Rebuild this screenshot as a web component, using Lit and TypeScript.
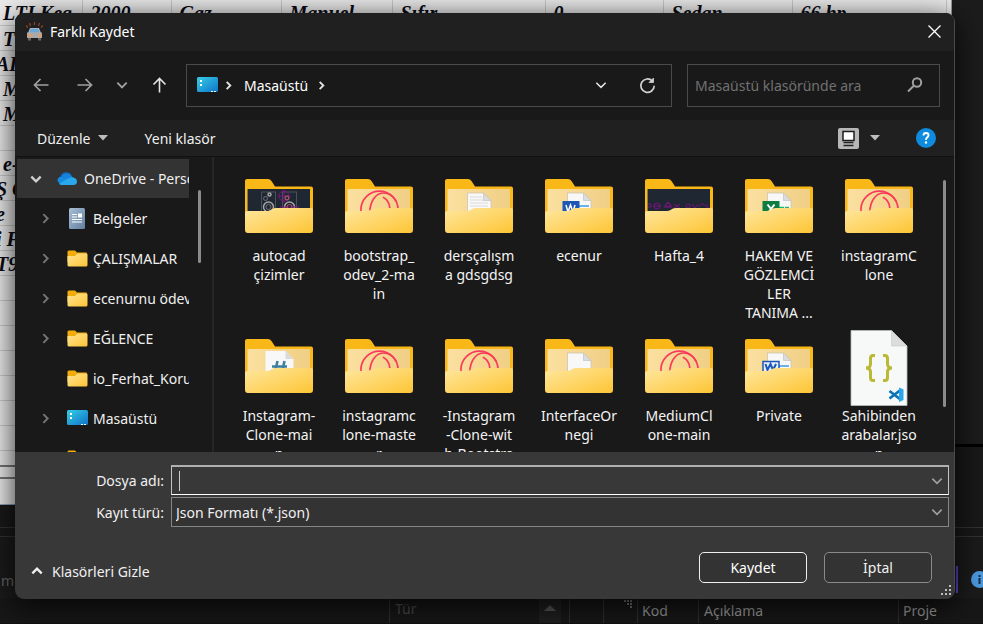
import { LitElement, html, css, svg, nothing } from "lit";
import { customElement } from "lit/decorators.js";

type Inset = "cad" | "opera" | "text" | "word" | "purple" | "excel" | "css" | "blank" | "wordold";

interface FileItem {
  lines: string[];
  inset?: Inset;
  json?: boolean;
}

const FILES: FileItem[] = [
  { lines: ["autocad", "çizimler"], inset: "cad" },
  { lines: ["bootstrap_", "odev_2-ma", "in"], inset: "opera" },
  { lines: ["dersçalışm", "a gdsgdsg"], inset: "text" },
  { lines: ["ecenur"], inset: "word" },
  { lines: ["Hafta_4"], inset: "purple" },
  { lines: ["HAKEM VE", "GÖZLEMCİ", "LER", "TANIMA ..."], inset: "excel" },
  { lines: ["instagramC", "lone"], inset: "opera" },
  { lines: ["Instagram-", "Clone-mai", "n"], inset: "css" },
  { lines: ["instagramc", "lone-maste", "r"], inset: "opera" },
  { lines: ["-Instagram", "-Clone-wit", "h-Bootstra"], inset: "opera" },
  { lines: ["InterfaceOr", "negi"], inset: "blank" },
  { lines: ["MediumCl", "one-main"], inset: "opera" },
  { lines: ["Private"], inset: "wordold" },
  { lines: ["Sahibinden", "arabalar.jso", "n"], json: true },
];

type TreeIcon = "cloud" | "doc" | "folder" | "desktop";
const TREE: { label: string; icon: TreeIcon; arrow: boolean }[] = [
  { label: "Belgeler", icon: "doc", arrow: true },
  { label: "ÇALIŞMALAR", icon: "folder", arrow: true },
  { label: "ecenurnu ödevler", icon: "folder", arrow: true },
  { label: "EĞLENCE", icon: "folder", arrow: true },
  { label: "io_Ferhat_Korucu", icon: "folder", arrow: false },
  { label: "Masaüstü", icon: "desktop", arrow: true },
  { label: "", icon: "folder", arrow: false },
];

const SHEET: string[][] = [
  ["LTI Keg", "2000", "Gaz", "Manuel", "Sıfır", "0", "Sedan", "66 hp"],
  ["T"], ["AI"], ["M"], ["M"], [], ["e-"], ["Ş C"], ["e"], ["i F"], ["T9"],
  [], [], [], [], [], [], [],
];
const SCROLLED_ROWS = new Set([2, 7, 8, 9, 10]);

const chevron = (dir: "down" | "right" | "up", size = 12, w = 2) => {
  const d = { down: "M2 4 L6 8 L10 4", right: "M4 2 L8 6 L4 10", up: "M2 8 L6 4 L10 8" }[dir];
  return html`<svg width=${size} height=${size} viewBox="0 0 12 12" fill="none" stroke="currentColor" stroke-width=${w}><path d=${d} /></svg>`;
};

const desktopIcon = html`<svg width="21" height="16" viewBox="0 0 21 16">
  <defs><linearGradient id="dk" x1="0" y1="0" x2="1" y2="1"><stop offset="0" stop-color="#35cfe6" /><stop offset="1" stop-color="#1072c8" /></linearGradient></defs>
  <rect width="21" height="15" rx="1.5" fill="url(#dk)" />
  <path d="M3 3h2v2H3zM3 7h2v2H3z" fill="#fff" /><path d="M14 14h2v1h-2zM17 14h2v1h-2z" fill="#dff" />
</svg>`;

const smallFolder = html`<svg width="21" height="17" viewBox="0 0 21 17">
  <defs><linearGradient id="sf" x1="0" y1="0" x2="1" y2="1"><stop offset="0" stop-color="#ffe394" /><stop offset="1" stop-color="#fcc435" /></linearGradient></defs>
  <path d="M1.500 0.500H8L10 2.500H19.500L20 4V12H0.500V1.500Z" fill="#f3ad0b" />
  <path d="M0.500 6H8L10.500 3.500H19.500Q20.500 3.500 20.500 4.500V15Q20.500 16.500 19 16.500H2Q0.500 16.500 0.500 15Z" fill="url(#sf)" />
</svg>`;

const treeIcon = (kind: TreeIcon) => {
  if (kind === "cloud")
    return html`<svg width="20" height="13" viewBox="0 0 20 13">
      <path d="M4.500 12A4.200 4.200 0 0 1 3.500 4.300A6 6 0 0 1 14.500 3.500L16 6L11 11Z" fill="#0f6cc4" />
      <path d="M7 2A6 6 0 0 1 14.800 4.400L16.500 7L9 8L5 4Z" fill="#1683da" />
      <path d="M2 11Q0 9 .6 7Q1.800 4.500 5 4.500L15 9.500L12 12.800H4Q3 12.800 2 11Z" fill="#168ade" />
      <path d="M4 13L2 12Q10 7 12 6Q14 4.600 16.500 5.600Q20 6.700 20 9.800Q19.600 13 16.500 13Z" fill="#29a9ec" />
    </svg>`;
  if (kind === "doc")
    return html`<svg width="16" height="21" viewBox="0 0 16 21">
      <defs><linearGradient id="dc" x1="0" y1="0" x2="1" y2="1"><stop offset="0" stop-color="#a9bfd6" /><stop offset="1" stop-color="#627f9f" /></linearGradient></defs>
      <rect width="16" height="21" rx="1.500" fill="url(#dc)" />
      <path d="M3 6h5v1H3zM3 8.500h5v1H3zM9 5.500h4v4H9zM3 11h10v1H3zM3 13.500h10v1H3z" fill="#fff" />
    </svg>`;
  return kind === "desktop" ? desktopIcon : smallFolder;
};

const page = svg`<path d="M22.500 14H38.500L46 21.500V40H22.500Z" fill="#f8f8f8" stroke="#c9c2b0" stroke-width=".7"/><path d="M38.500 14V21.500H46Z" fill="#dcdcdc" stroke="#bbb" stroke-width=".6"/>`;

const insetArt = (kind?: Inset) => {
  switch (kind) {
    case "opera":
      return svg`<g fill="none" stroke="#fa3a5c" stroke-width="1.700" stroke-linecap="round">
        <circle cx="34.500" cy="30.800" r="18.600"/>
        <path d="M24.800 33C25 23 30 14.500 38 14C44 13.800 48.500 17.500 51 22"/>
        <path d="M38.500 18.500C42 20.500 44.500 24 44.800 29"/></g>`;
    case "cad":
      return svg`<path d="M2.500 10H65V36H2.500Z" fill="#1f2733"/>
        <g fill="none" stroke="#4c5258" stroke-width="1"><rect x="16.500" y="13" width="14" height="24"/><rect x="37.500" y="13" width="14" height="24"/></g>
        <g fill="none" stroke="#a5a5a5" stroke-width="1.500"><circle cx="23.500" cy="28" r="5"/><circle cx="44.500" cy="28" r="5"/><circle cx="24.500" cy="15.500" r="1.500"/></g>
        <g fill="none" stroke="#707078" stroke-width="1"><circle cx="20.500" cy="19.500" r="2"/><circle cx="23.500" cy="28" r="2.500"/></g>
        <g fill="none" stroke="#7b157f" stroke-width="1"><circle cx="39" cy="17" r="5"/><path d="M33 17H46M39 11V24M35 28H54"/></g>
        <circle cx="42" cy="19" r="2" fill="none" stroke="#c46a70"/><circle cx="44.500" cy="28" r="2.500" fill="none" stroke="#b6516a"/>`;
    case "purple":
      return svg`<path d="M2.500 10H65V36H2.500Z" fill="#1f2733"/>
        <g fill="none" stroke="#7b127f" stroke-width="1"><path d="M3 25h3v3H3M8 27h8M19 28l4-5 4 5ZM29 25l6 4M29 29l6-4M47 25l3 4 3-4M54 28q3-6 6-1M62 25v4h3"/><circle cx="12" cy="27" r="3"/><circle cx="23" cy="26" r="2"/><circle cx="43" cy="27" r="2"/></g>`;
    case "text":
      return svg`${page}<path d="M25 18h12M25 21h14M25 24h18M25 27h18" stroke="#d2d2d2" stroke-width=".8"/>`;
    case "blank":
      return page;
    case "word":
      return svg`${page}<path d="M34 27H44" stroke="#3f9be0" stroke-width="1.500"/><rect x="17.500" y="22" width="17" height="15" fill="#1c57b5"/><path d="M21 26l2 7 2.500-7 2.500 7 2-7" fill="none" stroke="#fff" stroke-width="1.500"/>`;
    case "wordold":
      return svg`${page}<path d="M34 27H44" stroke="#3f9be0" stroke-width="1.500"/><rect x="18" y="22.500" width="16" height="15" fill="#e6eefb" stroke="#1c57b5" stroke-width="1.500"/><path d="M20.500 25l2 6 3-6 2.500 6 3-6" fill="none" stroke="#1c57b5" stroke-width="2"/>`;
    case "excel":
      return svg`${page}<path d="M34 28.500H39M40 28.500H44" stroke="#24b36b" stroke-width="1.500"/><rect x="17.500" y="22" width="17" height="15" fill="#107c41"/><path d="M22.500 25.500l7 9M29.500 25.500l-7 9" stroke="#fff" stroke-width="2"/>`;
    case "css":
      return svg`<path d="M20.500 12H40.500L48.500 20V38H20.500Z" fill="#f8f8f8"/><path d="M40.500 12V20H48.500Z" fill="#dadada"/><path d="M27 27.500H42M32.500 22L30.500 31M39.500 22L37.500 31" stroke="#3e7f9d" stroke-width="2.600" fill="none"/>`;
    default:
      return nothing;
  }
};

const bigFolder = (kind?: Inset) => html`<svg class="folder" width="68" height="54" viewBox="0 0 68 54">
  <defs>
    <linearGradient id="fr" x1="0" y1="0" x2="1" y2="1"><stop offset="0" stop-color="#ffe79e" /><stop offset="1" stop-color="#fdc535" /></linearGradient>
    <linearGradient id="in" x1="0" y1="0" x2="1" y2="0"><stop offset="0" stop-color="#fbe0a0" /><stop offset="1" stop-color="#f0cf85" /></linearGradient>
  </defs>
  <path d="M2 0H23Q25 0 26.500 2L30 7.500H66Q68 7.500 68 9.500V48H0V2Q0 0 2 0Z" fill="#fab818" />
  <path d="M2.500 10H65V40H2.500Z" fill="url(#in)" />
  ${insetArt(kind)}
  <path d="M0 34Q0 32 2 32H22Q24 32 25.500 31L28 29.500Q29 29 31 29H66Q68 29 68 31V51Q68 54 65 54H3Q0 54 0 51Z" fill="url(#fr)" />
</svg>`;

const jsonFile = html`<svg width="58" height="76" viewBox="0 0 58 76">
  <path d="M1 .5H41.500L57 16V75.500H1Z" fill="#f7f8f8" stroke="#b9bcbc" stroke-width=".8" />
  <path d="M41.500 .5V16H57Z" fill="#dcdcdc" stroke="#c6c6c6" stroke-width=".6" />
  <g fill="none" stroke="#b9b936" stroke-width="3"><path d="M25 25.500H23Q20.500 25.500 20.500 28.500V34Q20.500 38 16 38Q20.500 38 20.500 42V47.500Q20.500 50.500 23 50.500H25" /><path d="M33 25.500H35Q37.500 25.500 37.500 28.500V34Q37.500 38 42 38Q37.500 38 37.500 42V47.500Q37.500 50.500 35 50.500H33" /></g>
  <path d="M39.500 61L50.500 69.500M39.500 68.500L50.500 60" stroke="#0c72b8" stroke-width="2.800" fill="none" />
  <path d="M49 57.500L53.500 59.500V70L49 72Z" fill="#2aa5ea" />
</svg>`;

@customElement("app-root")
export class AppRoot extends LitElement {
  static styles = css`
    :host {
      display: grid;
      grid-template: minmax(0, 1fr) / minmax(0, 1fr);
      height: 100vh;
      overflow: hidden;
      background: #191919;
      color: #f0f0f0;
      font: 14px/19px "Noto Sans", "Open Sans", sans-serif;
    }
    * { box-sizing: border-box; }
    svg { display: block; flex: none; }
    button, input, select {
      font: inherit; color: inherit; background: none; border: 0; padding: 0; margin: 0;
      outline: none; border-radius: 0; min-width: 0; appearance: none;
    }
    button { display: flex; align-items: center; }
    .behind, .dialog { grid-area: 1 / 1; min-height: 0; min-width: 0; }

    .behind { display: flex; flex-direction: column; overflow: hidden; }
    .desk { display: flex; height: 505px; flex: none; }
    .sheet {
      flex: 1; min-width: 0; overflow: hidden; background: #ececec; border-bottom: 1px solid #8fa4bb;
      border-right: 1px solid #9a9aa4; color: #0a0a14;
    }
    .side { width: 31px; flex: none; }
    .side-top { height: 447px; background: #1c1c1c; border-bottom: 3px solid #000; }
    .grid { width: 947px; table-layout: fixed; border-collapse: collapse; font: italic bold 20px/22px "Liberation Serif", serif; }
    .grid td { height: 25px; padding: 2px 0 0 8px; border: 0 solid #cacaca; border-width: 0 1px 1px 0; white-space: nowrap; overflow: hidden; }
    .grid td:first-child { padding-left: 3px; }
    .grid .scrolled td { text-indent: -7px; }
    .c1 { width: 82px; } .c2 { width: 89px; } .c3 { width: 110px; } .c4 { width: 111px; }
    .c5 { width: 153px; } .c6 { width: 118px; } .c7 { width: 129px; }
    .sheet-foot { margin-top: 14px; height: 14px; border: solid #777; border-width: 2px 0; }
    .tools {
      height: 93px; flex: none; display: flex; align-items: flex-end; justify-content: space-between; color: #666;
      background: linear-gradient(#191919 22px, #333 22px 23px, #191919 23px 31px, #333 31px 32px, #1b1b1b 32px);
    }
    .tools span { padding: 0 0 8px 1px; }
    .info { display: flex; align-items: center; border-left: 2px solid #5b45c9; height: 27px; margin-bottom: 5px; width: 27px; }
    .info i { width: 1px; height: 22px; margin-left: 4px; background: #333; }
    .info svg { margin-left: 9px; }
    .columns { flex: 1; display: flex; background: #171717; color: #9a9a9a; font: 14px/25px "Noto Sans", sans-serif; border-bottom: 2px solid #111; }
    .columns div { border-left: 1px solid #303030; padding-left: 5px; white-space: nowrap; }
    .columns .k0 { width: 389px; border: 0; } .columns .k1 { width: 150px; color: #4c4c4c; line-height: 21px; }
    .columns .k2 { width: 22px; margin-right: 8px; border: 0; padding: 7px 5px 0; background: #202020; }
    .columns .k3 { width: 34px; } .columns .k4 { width: 34px; padding: 2px 0 0 20px; }
    .columns .k5 { width: 61px; padding-left: 4px; } .columns .k6 { width: 200px; } .columns .k7 { flex: 1; padding-left: 4px; }

    .dialog {
      margin: 13px 28px 25px 15px; display: flex; flex-direction: column; overflow: hidden;
      background: #191919; border-radius: 9px; border-right: 1px solid #4a4a4a;
      box-shadow: 0 6px 30px rgba(0, 0, 0, 0.85);
    }
    .title { height: 38px; flex: none; display: flex; align-items: center; gap: 7px; padding: 0 13px 1px 11px; background: #202020; }
    .title h1 { flex: 1; margin: 0; font: inherit; color: #fff; }
    .nav { height: 69px; flex: none; display: flex; align-items: center; padding: 0 14px 1px 17px; color: #e4e4e4; }
    .nav .move { width: 18px; height: 24px; justify-content: center; }
    .arrows { display: flex; align-items: center; width: 154px; gap: 26px; flex: none; }
    .arrows .move:nth-child(3) { width: 12px; margin: 0 -4px; }
    .dim { color: #a0a0a0; }
    .places { flex: 1; display: grid; grid-template-columns: minmax(0, 486fr) minmax(0, 253fr); gap: 15px; }
    .address, .search { height: 43px; border: 1px solid #4a4a4a; display: flex; align-items: center; }
    .address { padding: 0 15px 0 10px; }
    .address .crumb { padding: 0 8px 0 10px; color: #fff; }
    .address .gap { flex: 1; }
    .address .sepbox { margin-left: 5px; }
    .address .refresh { margin-left: 31px; }
    .search { padding: 0 16px 0 7px; }
    .search input { flex: 1; }
    .search input::placeholder { color: #717171; opacity: 1; }
    .toolbar { height: 37px; flex: none; display: flex; align-items: center; padding: 0 18px 0 22px; background: #202020; border-bottom: 1px solid #141012; }
    .toolbar .new { margin-left: 37px; flex: 1; }
    .toolbar .organize { gap: 7px; }
    .toolbar .view { gap: 11px; margin-right: 36px; }

    .body { flex: 1; min-height: 0; display: flex; overflow: hidden; }
    .tree { width: 174px; flex: none; margin: 0; padding: 2px 0 0; overflow: hidden; list-style: none; }
    .tree li { height: 40px; display: flex; align-items: center; padding-left: 24px; white-space: nowrap; color: #757575; }
    .tree .root { height: 39px; margin-left: 2px; padding-left: 12px; background: #333; color: #d0d0d0; }
    .tree .arrow { width: 27px; flex: none; }
    .tree .pic { width: 22px; margin-right: 5px; display: flex; justify-content: center; flex: none; }
    .tree .root .pic { margin-right: 6px; }
    .tree a { color: #f0f0f0; text-decoration: none; }
    .rail { width: 3px; flex: none; background: #8b8b8b; border-radius: 2px; }
    .rail.left { margin: 33px 11px 0 9px; height: 73px; }
    .rail.right { margin: 23px 8px 0 0; height: 227px; }
    .divider { width: 2px; flex: none; background: #262626; }
    .files {
      flex: 1; min-width: 0; margin: 0; padding: 13px 0 0 15px; list-style: none; overflow: hidden;
      display: grid; grid-template-columns: repeat(auto-fill, 100px); grid-auto-rows: 160px;
    }
    .files li { text-align: center; color: #f4f4f4; white-space: nowrap; }
    .files li span { display: block; }
    .thumb { height: 76px; display: flex; align-items: center; justify-content: center; }
    .thumb .folder { margin-bottom: 4px; }

    .footer { flex: none; height: 147px; background: #383838; padding: 13px 5px 16px 14px; display: flex; flex-direction: column; }
    .fields { display: grid; grid-template-columns: 135px minmax(0, 1fr); column-gap: 7px; row-gap: 2px; align-items: center; }
    .fields label { text-align: right; white-space: nowrap; }
    .combo { height: 30px; display: grid; align-items: center; border: 1px solid #c4c4c4; border-top: 2px solid #b0b0b0; border-bottom-color: #fff; background: #383838; padding: 0 4px; }
    .combo > * { grid-area: 1 / 1; }
    .combo svg { justify-self: end; color: #a0a0a0; pointer-events: none; }
    .combo.type { border: 1px solid #868686; background: #333; }
    .combo input, .combo select { width: 100%; height: 100%; }
    .caret { width: 1px; height: 20px; margin-left: 3px; background: #ccc; }
    .actions { display: flex; align-items: center; margin-top: auto; padding-right: 17px; gap: 17px; }
    .actions .hide { margin-right: auto; gap: 8px; padding-top: 7px; margin-left: 1px; }
    .push { width: 108px; height: 31px; justify-content: center; border: 1px solid #8a8a8a; border-radius: 5px; background: #333; }
    .push.primary { border-color: #f0f0f0; color: #fff; }
    .grip { position: absolute; right: 31px; bottom: 28px; }
  `;

  render() {
    return html`
      <div class="behind">
        <div class="desk">
          <div class="sheet">
            <table class="grid">
              <colgroup>${[1, 2, 3, 4, 5, 6, 7, 8].map((n) => html`<col class="c${n}" />`)}</colgroup>
              <tbody>${SHEET.map((row, r) => html`<tr class=${SCROLLED_ROWS.has(r) ? "scrolled" : ""}>${[0, 1, 2, 3, 4, 5, 6, 7].map((i) => html`<td>${row[i] ?? ""}</td>`)}</tr>`)}</tbody>
            </table>
            <div class="sheet-foot"></div>
          </div>
          <div class="side"><div class="side-top"></div></div>
        </div>
        <div class="tools">
          <span>m</span>
          <div class="info"><i></i><svg width="17" height="17" viewBox="0 0 17 17"><circle cx="8.500" cy="8.500" r="8.500" fill="#4d9be0" /><path d="M7.500 7h2v6h-2zM7.500 4h2v2h-2z" fill="#14304c" /></svg></div>
        </div>
        <div class="columns">
          <div class="k0"></div><div class="k1">Tür</div>
          <div class="k2"><svg width="12" height="6" viewBox="0 0 12 6"><path d="M0 6L6 0L12 6Z" fill="#555" /></svg></div>
          <div class="k3"></div>
          <div class="k4"><svg width="8" height="8" viewBox="0 0 8 8" fill="#777"><path d="M0 0h2v2H0zM3 0h2v2H3zM6 0h2v2H6zM3 3h2v2H3zM6 3h2v2H6zM6 6h2v2H6z" /></svg></div>
          <div class="k5">Kod</div><div class="k6">Açıklama</div><div class="k7">Proje</div>
        </div>
      </div>

      <section class="dialog" role="dialog" aria-label="Farklı Kaydet">
        <header class="title">
          <svg width="17" height="19" viewBox="0 0 17 19">
            <path d="M0 3.500L2 5.500M3.500 1L4.500 4M8.500 0V3M13.500 1L12.500 4M17 3.500L15 5.500" stroke="#8c4522" stroke-width="1.300" />
            <path d="M4 6H13L15 11H2Z" fill="#a9b3bb" /><path d="M4.800 7H12.200L13.500 10.500H3.500Z" fill="#69a9d8" />
            <path d="M1 10.500H16V16H1Z" fill="#aaa9a8" /><path d="M2 16h3v2.500H2zM12 16h3v2.500h-3z" fill="#666" />
            <circle cx="3.500" cy="13.500" r="1.500" fill="#f09a55" /><circle cx="13.500" cy="13.500" r="1.500" fill="#f09a55" />
          </svg>
          <h1>Farklı Kaydet</h1>
          <button aria-label="Kapat"><svg width="13" height="13" viewBox="0 0 13 13" stroke="#fff" stroke-width="1.300"><path d="M.5 .5L12.500 12.500M12.500 .5L.5 12.500" /></svg></button>
        </header>

        <div class="nav">
          <div class="arrows">
            <button class="move dim" aria-label="Geri"><svg width="16" height="14" viewBox="0 0 16 14" fill="none" stroke="currentColor" stroke-width="1.700"><path d="M15.500 7H1.500M7.500 1L1.500 7L7.500 13" /></svg></button>
            <button class="move dim" aria-label="İleri"><svg width="16" height="14" viewBox="0 0 16 14" fill="none" stroke="currentColor" stroke-width="1.700"><path d="M.5 7H14.500M8.500 1L14.500 7L8.500 13" /></svg></button>
            <button class="move dim" aria-label="Son konumlar">${chevron("down", 14, 1.6)}</button>
            <button class="move" aria-label="Yukarı"><svg width="15" height="16" viewBox="0 0 15 16" fill="none" stroke="currentColor" stroke-width="1.600"><path d="M7.500 15.500V1.500M1.500 7.500L7.500 1.500L13.500 7.500" /></svg></button>
          </div>
          <div class="places">
            <div class="address">
              ${desktopIcon}<span class="sepbox">${chevron("right", 11, 2)}</span><span class="crumb">Masaüstü</span>${chevron("right", 11, 2)}
              <span class="gap"></span>
              <button aria-label="Önceki konumlar">${chevron("down", 14, 1.3)}</button>
              <button class="refresh" aria-label="Yenile"><svg width="17" height="17" viewBox="0 0 17 17" fill="none" stroke="#d0d0d0" stroke-width="1.700"><path d="M13.300 4A6.700 6.700 0 1 0 15.200 8.700" /><path d="M14.500 1V5.500H10Z" fill="#d0d0d0" stroke-width=".8" /></svg></button>
            </div>
            <div class="search">
              <input type="search" placeholder="Masaüstü klasöründe ara" aria-label="Masaüstü klasöründe ara" />
              <svg width="16" height="16" viewBox="0 0 16 16" fill="none" stroke="#a0a0a0" stroke-width="2"><circle cx="10" cy="5.500" r="4.200" /><path d="M7 8.500L1 14.500" /></svg>
            </div>
          </div>
        </div>

        <div class="toolbar">
          <button class="organize">Düzenle<svg width="10" height="6" viewBox="0 0 10 6"><path d="M0 0H10L5 5.500Z" fill="#bdbdbd" /></svg></button>
          <button class="new">Yeni klasör</button>
          <button class="view" aria-label="Görünüm">
            <svg width="21" height="21" viewBox="0 0 21 21"><rect width="21" height="21" rx="2" fill="#b7b7b7" /><rect x="5" y="3.500" width="11" height="9" fill="#fff" stroke="#1c1c1c" stroke-width="1.500" /><path d="M5.500 14.500H15.500M5.500 17.500H15.500" stroke="#222" stroke-width="1.400" /></svg>
            <svg width="10" height="6" viewBox="0 0 10 6"><path d="M0 0H10L5 5.500Z" fill="#bdbdbd" /></svg>
          </button>
          <button aria-label="Yardım"><svg width="20" height="20" viewBox="0 0 20 20"><circle cx="10" cy="10" r="10" fill="#0e8ade" /><path d="M7.500 7.500Q7.500 5 10 5Q12.500 5 12.500 7.300Q12.500 8.800 11 9.600Q10 10.200 10 12" fill="none" stroke="#fff" stroke-width="1.900" /><circle cx="10" cy="14.500" r="1.200" fill="#fff" /></svg></button>
        </div>

        <div class="body">
          <ul class="tree">
            <li class="root"><span class="arrow">${chevron("down", 14, 2)}</span><span class="pic">${treeIcon("cloud")}</span><a href="#onedrive">OneDrive - Personal</a></li>
            ${TREE.map((t) => html`<li><span class="arrow">${t.arrow ? chevron("right", 13, 1.8) : nothing}</span><span class="pic">${treeIcon(t.icon)}</span>${t.label ? html`<a href="#klasor">${t.label}</a>` : nothing}</li>`)}
          </ul>
          <div class="rail left"></div>
          <div class="divider"></div>
          <ul class="files">
            ${FILES.map((f) => html`<li><div class="thumb">${f.json ? jsonFile : bigFolder(f.inset)}</div>${f.lines.map((l) => html`<span>${l}</span>`)}</li>`)}
          </ul>
          <div class="rail right"></div>
        </div>

        <div class="footer">
          <div class="fields">
            <label for="name">Dosya adı:</label>
            <div class="combo"><input id="name" type="text" /><span class="caret"></span>${chevron("down", 14, 1.4)}</div>
            <label for="type">Kayıt türü:</label>
            <div class="combo type"><select id="type"><option>Json Formatı (*.json)</option></select>${chevron("down", 14, 1.4)}</div>
          </div>
          <div class="actions">
            <button class="hide">${chevron("up", 14, 2)}Klasörleri Gizle</button>
            <button class="push primary">Kaydet</button>
            <button class="push">İptal</button>
          </div>
        </div>
        <svg class="grip" width="11" height="11" viewBox="0 0 11 11" fill="#bdbdbd"><path d="M8 0h2v2H8zM4 4h2v2H4zM8 4h2v2H8zM0 8h2v2H0zM4 8h2v2H4zM8 8h2v2H8z" /></svg>
      </section>
    `;
  }
}
